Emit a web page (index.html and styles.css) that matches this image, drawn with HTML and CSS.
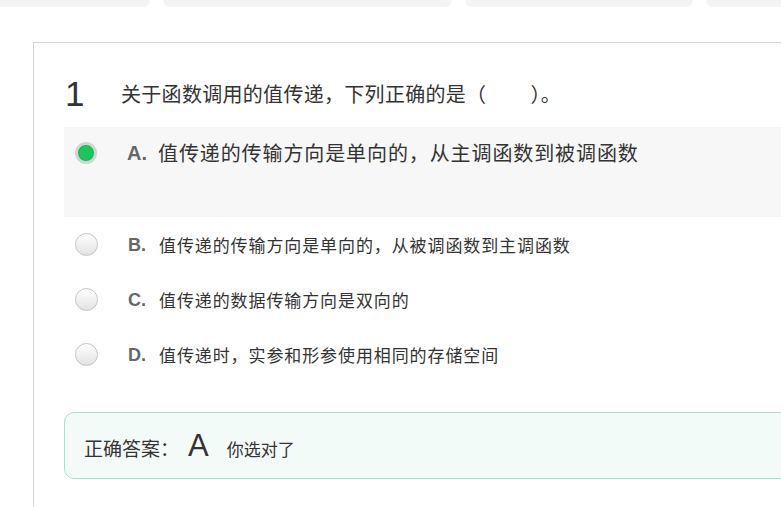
FILE: index.html
```html
<!DOCTYPE html>
<html lang="zh-CN">
<head>
<meta charset="utf-8">
<title>单选题</title>
<link rel="stylesheet" href="styles.css">
</head>
<body>
<div class="tabs">
  <div class="tab tab1"></div>
  <div class="tab tab2"></div>
  <div class="tab tab3"></div>
  <div class="tab tab4"></div>
</div>
<div class="card">
  <div class="question">
    <span class="num">1</span>
    <span class="qtext">关于函数调用的值传递，下列正确的是（<span class="blank"></span>）。</span>
  </div>
  <ul class="options">
    <li class="option selected">
      <span class="radio"></span>
      <span class="label">A.</span>
      <span class="otext">值传递的传输方向是单向的，从主调函数到被调函数</span>
    </li>
    <li class="option">
      <span class="radio"></span>
      <span class="label">B.</span>
      <span class="otext">值传递的传输方向是单向的，从被调函数到主调函数</span>
    </li>
    <li class="option">
      <span class="radio"></span>
      <span class="label">C.</span>
      <span class="otext">值传递的数据传输方向是双向的</span>
    </li>
    <li class="option">
      <span class="radio"></span>
      <span class="label">D.</span>
      <span class="otext">值传递时，实参和形参使用相同的存储空间</span>
    </li>
  </ul>
  <div class="answer">
    <span class="ans-title">正确答案：</span>
    <span class="ans-letter">A</span>
    <span class="ans-note">你选对了</span>
  </div>
</div>
</body>
</html>
```
FILE: styles.css
```css
html, body {
  margin: 0;
  padding: 0;
  background: #fff;
  overflow: hidden;
}
body {
  width: 781px;
  height: 507px;
  font-family: "Noto Sans CJK SC", "Noto Sans", sans-serif;
  color: #333;
}
.tabs {
  display: flex;
  height: 7px;
  gap: 13px;
  margin-left: -20px;
}
.tab {
  height: 7px;
  background: #f4f4f4;
  border-radius: 0 0 8px 8px;
  flex: none;
}
.tab1 { width: 170px; }
.tab2 { width: 289px; }
.tab3 { width: 228px; }
.tab4 { width: 120px; }

.card {
  margin: 35px 0 0 33px;
  width: 820px;
  height: 480px;
  border-top: 1px solid #d6d6d6;
  border-left: 1px solid #d6d6d6;
  padding-left: 30px;
  box-sizing: border-box;
}
.question {
  display: flex;
  align-items: center;
  height: 30px;
  padding-top: 36px;
}
.num {
  width: 57px;
  flex: none;
  font-family: "Liberation Sans", Arial, sans-serif;
  font-size: 35px;
  line-height: 30px;
  color: #333;
  padding-left: 1px;
  box-sizing: border-box;
}
.qtext {
  font-size: 20px;
  line-height: 30px;
  letter-spacing: 0.3px;
  color: #333;
  white-space: nowrap;
}
.blank {
  display: inline-block;
  width: 44px;
}
.options {
  list-style: none;
  margin: 18px 0 0 0;
  padding: 0;
}
.option {
  display: flex;
  align-items: center;
  height: 55px;
  padding-left: 11px;
}
.option.selected {
  height: 90px;
  align-items: flex-start;
  padding-top: 11px;
  box-sizing: border-box;
  background: #f7f7f7;
}
.radio {
  flex: none;
  width: 21px;
  height: 21px;
  border-radius: 50%;
  border: 1px solid #c4c4c4;
  background: linear-gradient(#ffffff, #e2e2e2);
  box-shadow: inset 0 1px 1px #fff;
}
.selected .radio {
  margin-top: 4px;
  width: 16px;
  height: 16px;
  border: 3px solid #d4d4d4;
  background: #1cc65b;
  box-shadow: inset 0 0 0 1px #17b451;
}
.label {
  flex: none;
  margin-left: 30px;
  width: 31px;
  font-family: "Liberation Sans", Arial, sans-serif;
  font-weight: bold;
  font-size: 18px;
  color: #666;
  line-height: 30px;
}
.otext {
  font-size: 17px;
  letter-spacing: 0.9px;
  line-height: 30px;
  color: #333;
  white-space: nowrap;
}
.selected .label {
  font-size: 20px;
}
.selected .otext {
  font-size: 20px;
  letter-spacing: 0.9px;
}
.answer {
  margin-top: 30px;
  height: 65px;
  box-sizing: content-box;
  border: 1px solid #a4e2cc;
  border-radius: 10px;
  background: #f3fbf8;
  display: flex;
  align-items: baseline;
  padding-left: 19px;
}
.ans-title {
  font-size: 19px;
  line-height: 30px;
  margin-top: 20px;
  color: #333;
}
.ans-letter {
  font-family: "Liberation Sans", Arial, sans-serif;
  font-size: 31px;
  line-height: 30px;
  margin-left: 9px;
  color: #333;
}
.ans-note {
  font-size: 17px;
  margin-left: 18px;
  color: #333;
}
```
